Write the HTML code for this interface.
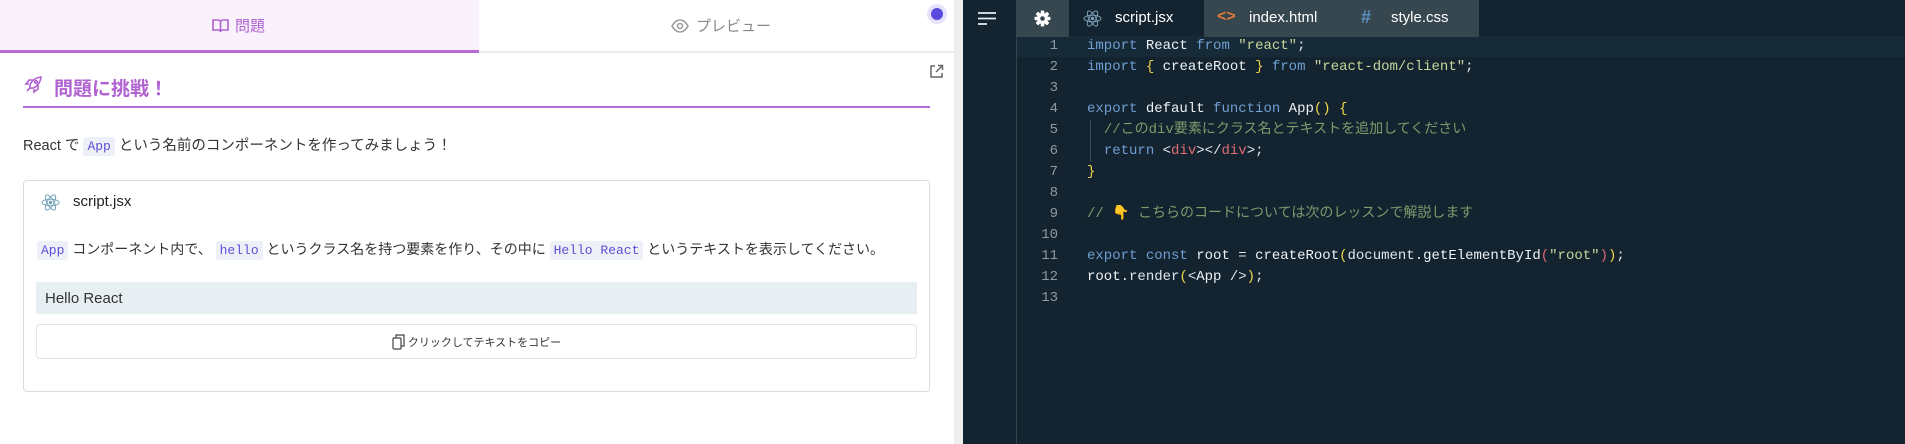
<!DOCTYPE html>
<html><head><meta charset="utf-8"><style>
*{margin:0;padding:0;box-sizing:border-box}
body{width:1905px;height:444px;overflow:hidden;background:#fff;font-family:"Liberation Sans","Noto Sans CJK JP",sans-serif;position:relative}
.abs{position:absolute}
.ic{background:#eef0f8;color:#5b4fd6;font-family:"Liberation Mono",monospace;font-size:13px;padding:2px 4px;border-radius:3px}
.code{position:absolute;left:1087px;top:36px;font-family:"Liberation Mono","Noto Sans CJK JP",monospace;font-size:14px;line-height:21px;color:#dfe6ea;white-space:pre}
.ln{position:absolute;left:1017px;width:41px;top:36px;text-align:right;font-family:"Liberation Mono",monospace;font-size:14px;line-height:21px;color:#8d9aa5;white-space:pre}
.k{color:#6f9fd3}.s{color:#c7d69b}.y{color:#f2d64b}.c{color:#7f9a6d}.t{color:#e06c75}.w{color:#eef2f5}
</style></head><body>
<div class="abs" style="left:0;top:0;width:479px;height:53px;background:#f9f2fd;border-bottom:3px solid #b56bd6"></div>
<div class="abs" style="left:479px;top:0;width:475px;height:53px;border-bottom:2px solid #ececec"></div>
<div class="abs" style="left:212px;top:15px;font-size:15px;color:#b062d0;display:flex;align-items:center;gap:6px">
<svg width="17" height="15" viewBox="0 0 17 15" fill="none" stroke="#b062d0" stroke-width="1.6"><path d="M1 2h5a2.5 2.5 0 0 1 2.5 2.5V14a2 2 0 0 0-2-2H1zM16 2h-5a2.5 2.5 0 0 0-2.5 2.5V14a2 2 0 0 1 2-2H16z"/></svg>問題</div>
<div class="abs" style="left:671px;top:15px;font-size:15px;color:#888;display:flex;align-items:center;gap:7px">
<svg width="18" height="14" viewBox="0 0 18 14" fill="none" stroke="#999" stroke-width="1.5"><path d="M1 7s3-6 8-6 8 6 8 6-3 6-8 6-8-6-8-6z"/><circle cx="9" cy="7" r="2.5"/></svg>プレビュー</div>
<div class="abs" style="left:927px;top:4px;width:20px;height:20px;border-radius:50%;background:#e6e2fb"></div>
<div class="abs" style="left:931px;top:8px;width:12px;height:12px;border-radius:50%;background:#5a4bde"></div>
<div class="abs" style="left:954px;top:0;width:9px;height:444px;background:#eeeeee"></div>
<svg class="abs" style="left:23px;top:75px" width="20" height="20" viewBox="0 0 20 20" fill="none" stroke="#b062d0" stroke-width="1.6"><path d="M7 13c-1-4 3-10 11-11-1 8-7 12-11 11zM7 13l-3 3M6 9H3l3-4h4M11 14v3l4-3v-4"/><circle cx="13" cy="7" r="1.3"/></svg>
<div class="abs" style="left:54px;top:74px;font-size:19px;font-weight:bold;color:#b062d0">問題に挑戦！</div>
<div class="abs" style="left:23px;top:106px;width:907px;height:2px;background:#b56bd6"></div>
<svg class="abs" style="left:929px;top:64px" width="15" height="15" viewBox="0 0 15 15" fill="none" stroke="#666" stroke-width="1.5"><path d="M6 2H2v11h11V9M9 1.5h4.5V6M13.5 1.5L7 8"/></svg>
<div class="abs" style="left:23px;top:134px;font-size:14.5px;color:#333">React で <span class="ic">App</span> という名前のコンポーネントを作ってみましょう！</div>
<div class="abs" style="left:23px;top:180px;width:907px;height:212px;border:1px solid #dcdcdc;border-radius:4px"></div>
<svg class="abs" style="left:41px;top:193px" width="19" height="19" viewBox="-10 -10 20 20" fill="none" stroke="#6fa0b8" stroke-width="1"><ellipse rx="9" ry="3.5"/><ellipse rx="9" ry="3.5" transform="rotate(60)"/><ellipse rx="9" ry="3.5" transform="rotate(120)"/><circle r="1.3" fill="#6fa0b8"/></svg>
<div class="abs" style="left:73px;top:193px;font-size:15px;color:#222">script.jsx</div>
<div class="abs" style="left:37px;top:239px;font-size:14px;color:#333"><span class="ic">App</span> コンポーネント内で、 <span class="ic">hello</span> というクラス名を持つ要素を作り、その中に <span class="ic">Hello React</span> というテキストを表示してください。</div>
<div class="abs" style="left:36px;top:282px;width:881px;height:32px;background:#e8eff2;font-size:15px;color:#333;padding:8px 9px">Hello React</div>
<div class="abs" style="left:36px;top:324px;width:881px;height:35px;border:1px solid #e3e3e3;border-radius:4px;font-size:11px;color:#333;display:flex;align-items:center;justify-content:center;gap:3px">
<svg width="13" height="16" viewBox="0 0 13 16" fill="none" stroke="#444" stroke-width="1.2"><rect x="1" y="4" width="8" height="11" rx="1"/><path d="M4 4V1h8v11H9"/></svg>クリックしてテキストをコピー</div>
<div class="abs" style="left:963px;top:0;width:942px;height:444px;background:#13232f"></div>
<div class="abs" style="left:1016px;top:37px;width:1px;height:407px;background:#33444f"></div>
<div class="abs" style="left:1017px;top:36px;width:888px;height:21px;background:#172a37"></div>
<svg class="abs" style="left:977px;top:12px" width="20" height="14" viewBox="0 0 20 14" stroke="#e8edf0" stroke-width="1.8"><path d="M1 1h18M1 6.5h18M1 12h9"/></svg>
<div class="abs" style="left:1016px;top:0;width:53px;height:37px;background:#37474f"></div>
<svg class="abs" style="left:1034px;top:10px" width="17" height="17" viewBox="-8.5 -8.5 17 17"><g fill="#fff"><circle r="5.5"/><rect x="-1.8" y="-8" width="3.6" height="16" rx="1"/><rect x="-1.8" y="-8" width="3.6" height="16" rx="1" transform="rotate(45)"/><rect x="-1.8" y="-8" width="3.6" height="16" rx="1" transform="rotate(90)"/><rect x="-1.8" y="-8" width="3.6" height="16" rx="1" transform="rotate(135)"/></g><circle r="2.3" fill="#37474f"/></svg>
<div class="abs" style="left:1204px;top:0;width:275px;height:37px;background:#37474f"></div>
<svg class="abs" style="left:1083px;top:9px" width="19" height="19" viewBox="-10 -10 20 20" fill="none" stroke="#7fa3b8" stroke-width="1"><ellipse rx="9" ry="3.5"/><ellipse rx="9" ry="3.5" transform="rotate(60)"/><ellipse rx="9" ry="3.5" transform="rotate(120)"/><circle r="1.3" fill="#7fa3b8"/></svg>
<div class="abs" style="left:1115px;top:9px;font-size:15px;color:#fff">script.jsx</div>
<div class="abs" style="left:1217px;top:8px;font-size:16px;color:#e07b3a;font-weight:bold">&lt;&gt;</div>
<div class="abs" style="left:1249px;top:9px;font-size:15px;color:#fff">index.html</div>
<div class="abs" style="left:1361px;top:7px;font-size:18px;color:#5b8fc0;font-weight:bold">#</div>
<div class="abs" style="left:1391px;top:9px;font-size:15px;color:#fff">style.css</div>
<div class="abs" style="left:1090px;top:120px;width:1px;height:42px;background:#3a4b57"></div>
<div class="ln"> 1
 2
 3
 4
 5
 6
 7
 8
 9
10
11
12
13</div>
<div class="code"><span class="k">import</span> <span class="w">React</span> <span class="k">from</span> <span class="s">"react"</span>;
<span class="k">import</span> <span class="y">{</span> <span class="w">createRoot</span> <span class="y">}</span> <span class="k">from</span> <span class="s">"react-dom/client"</span>;

<span class="k">export</span> <span class="w">default</span> <span class="k">function</span> <span class="w">App</span><span class="y">() {</span>
  <span class="c">//このdiv要素にクラス名とテキストを追加してください</span>
  <span class="k">return</span> &lt;<span class="t">div</span>&gt;&lt;/<span class="t">div</span>&gt;;
<span class="y">}</span>

<span class="c">// 👇 こちらのコードについては次のレッスンで解説します</span>

<span class="k">export</span> <span class="k">const</span> <span class="w">root</span> = <span class="w">createRoot</span><span class="y">(</span>document.<span class="w">getElementById</span><span class="t">(</span><span class="s">"root"</span><span class="t">)</span><span class="y">)</span>;
<span class="w">root</span>.render<span class="y">(</span>&lt;<span class="w">App</span> /&gt;<span class="y">)</span>;
</div>
</body></html>
